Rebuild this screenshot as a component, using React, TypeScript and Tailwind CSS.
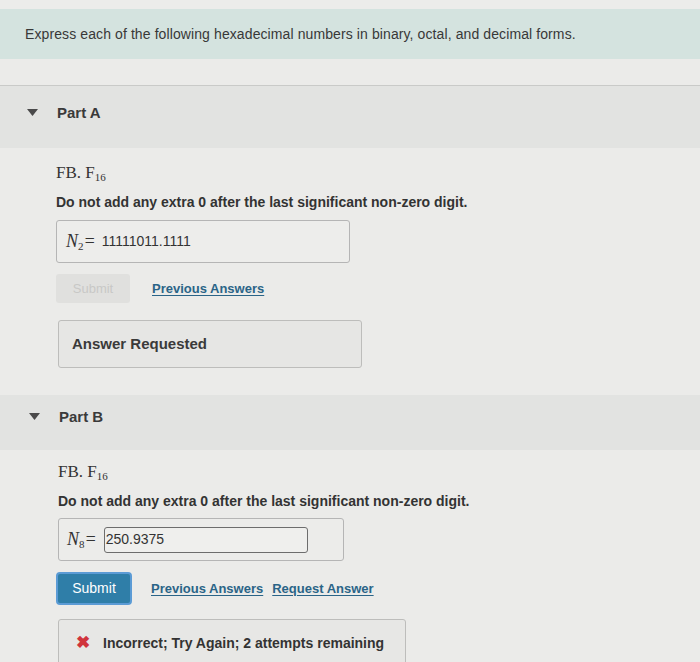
const font = { fontFamily: '"Liberation Sans", Arial, sans-serif' };

function Caret() {
  return (
    <svg width="11" height="8" viewBox="0 0 11 8" className="mt-[6px] shrink-0">
      <path d="M0 0 L11 0 L5.5 7 Z" fill="#4a4a4a" />
    </svg>
  );
}

function Hex({ className = "" }: { className?: string }) {
  return (
    <p className={`font-['Liberation_Serif',serif] text-[17px] leading-[20px] text-[#333] ${className}`}>
      FB. F<sub className="text-[11px]">16</sub>
    </p>
  );
}

function Link({ children }: { children: React.ReactNode }) {
  return (
    <a className="text-[13px] font-bold text-[#2a6487] underline underline-offset-2 decoration-[#2a6487]">{children}</a>
  );
}

export default function App() {
  return (
    <div style={font} className="h-[662px] w-[700px] overflow-hidden bg-[#ebebe9] text-[#333]">
      <div className="h-[9px] bg-[#ececea]" />
      <div className="flex h-[50px] items-center bg-[#d4e3df] pl-[25px]">
        <p className="text-[14px] tracking-[0.1px] text-[#383838]">
          Express each of the following hexadecimal numbers in binary, octal, and decimal forms.
        </p>
      </div>
      <div className="h-[26px]" />
      <div className="flex h-[63px] items-start gap-[19px] border-t border-[#c9cac8] bg-[#e2e3e1] pl-[27px] pt-[17px]">
        <Caret />
        <span className="text-[15px] font-bold leading-[20px] text-[#3a3a3a]">Part A</span>
      </div>
      <div className="pl-[56px]">
        <Hex className="mt-[15px]" />
        <p className="mt-[9px] text-[14px] font-bold leading-[20px] text-[#333]">
          Do not add any extra 0 after the last significant non-zero digit.
        </p>
        <div className="mt-[8px] flex h-[43px] w-[294px] items-center gap-[6px] rounded-[3px] border border-[#b5b5b5] bg-[#ededeb] pl-[9px]">
          <span className="font-['Liberation_Serif',serif] text-[18px] italic text-[#333]">
            N<sub className="text-[11px] not-italic">2</sub>=
          </span>
          <span className="text-[14px] text-[#333]">11111011.1111</span>
        </div>
        <div className="mt-[11px] flex items-center gap-[22px]">
          <button className="h-[29px] w-[74px] rounded-[3px] bg-[#e0e0de] text-[13px] text-[#c8c8c6]">Submit</button>
          <Link>Previous Answers</Link>
        </div>
        <div className="ml-[2px] mt-[17px] flex h-[48px] w-[304px] items-center rounded-[3px] border border-[#bdbdbb] bg-[#e6e6e4] pl-[13px]">
          <span className="text-[15px] font-bold text-[#3a3a3a]">Answer Requested</span>
        </div>
      </div>
      <div className="mt-[27px] flex h-[55px] items-start gap-[19px] bg-[#e2e3e1] pl-[29px] pt-[12px]">
        <Caret />
        <span className="text-[15px] font-bold leading-[20px] text-[#3a3a3a]">Part B</span>
      </div>
      <div className="pl-[58px]">
        <Hex className="mt-[12px]" />
        <p className="mt-[9px] text-[14px] font-bold leading-[20px] text-[#333]">
          Do not add any extra 0 after the last significant non-zero digit.
        </p>
        <div className="mt-[7px] flex h-[43px] w-[286px] items-center gap-[7px] rounded-[3px] border border-[#b5b5b5] bg-[#ececea] pl-[8px]">
          <span className="font-['Liberation_Serif',serif] text-[18px] italic text-[#333]">
            N<sub className="text-[11px] not-italic">8</sub>=
          </span>
          <div className="flex h-[26px] w-[204px] items-center rounded-[3px] border border-[#6d6d6d] bg-[#efefed] pl-[1px] text-[14px] text-[#333]">
            250.9375
          </div>
        </div>
        <div className="-ml-[2px] mt-[11px] flex items-center gap-[19px]">
          <button className="h-[33px] w-[76px] rounded-[4px] border-2 border-[#5b9bd5] bg-[#2f7ea8] text-[14px] text-white">
            Submit
          </button>
          <div className="flex items-center gap-[9px]">
            <Link>Previous Answers</Link>
            <Link>Request Answer</Link>
          </div>
        </div>
        <div className="mt-[14px] flex h-[48px] w-[348px] items-center gap-[13px] rounded-[3px] border border-[#bdbdbb] bg-[#e7e7e5] pl-[17px]">
          <span className="text-[17px] font-bold text-[#d0343c]">✖</span>
          <span className="whitespace-nowrap text-[14px] font-bold text-[#333]">
            Incorrect; Try Again; 2 attempts remaining
          </span>
        </div>
      </div>
    </div>
  );
}
